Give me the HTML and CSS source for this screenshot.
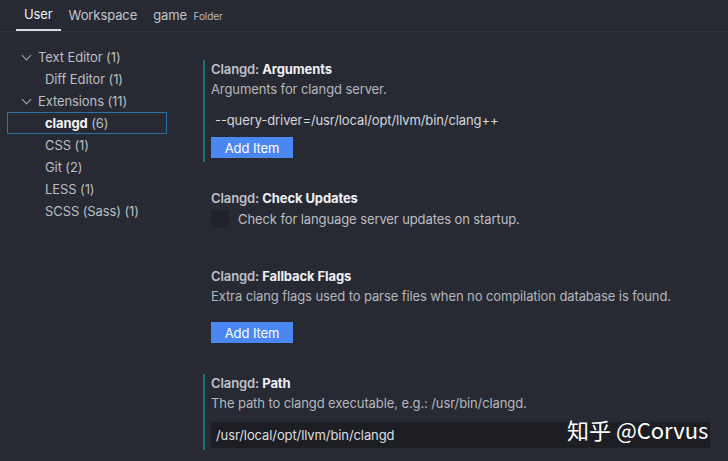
FILE: index.html
```html
<!DOCTYPE html>
<html lang="en">
<head>
    <meta charset="UTF-8">
    <title>Settings</title>
    <link rel="stylesheet" href="styles.css">
</head>
<body>
    <div class="tabs">
        <div class="tab active">User</div>
        <div class="tab">Workspace</div>
        <div class="tab">game <span class="tab-hint">Folder</span></div>
    </div>

    <div class="layout">
        <div class="tree">
            <div class="tree-row level-0"><span class="chevron"></span>Text Editor (1)</div>
            <div class="tree-row level-1">Diff Editor (1)</div>
            <div class="tree-row level-0"><span class="chevron"></span>Extensions (11)</div>
            <div class="tree-row level-1 selected"><b>clangd</b>&nbsp;(6)</div>
            <div class="tree-row level-1">CSS (1)</div>
            <div class="tree-row level-1">Git (2)</div>
            <div class="tree-row level-1">LESS (1)</div>
            <div class="tree-row level-1">SCSS (Sass) (1)</div>
        </div>

        <div class="settings">
            <div class="setting modified first">
                <div class="setting-title">Clangd: <b>Arguments</b></div>
                <div class="setting-desc">Arguments for clangd server.</div>
                <div class="list-item">--query-driver=/usr/local/opt/llvm/bin/clang++</div>
                <button class="add-btn">Add Item</button>
            </div>

            <div class="setting check-setting">
                <div class="setting-title">Clangd: <b>Check Updates</b></div>
                <label class="check-row"><span class="checkbox"></span>Check for language server updates on startup.</label>
            </div>

            <div class="setting flags-setting">
                <div class="setting-title">Clangd: <b>Fallback Flags</b></div>
                <div class="setting-desc">Extra clang flags used to parse files when no compilation database is found.</div>
                <button class="add-btn spaced">Add Item</button>
            </div>

            <div class="setting modified path-setting">
                <div class="setting-title">Clangd: <b>Path</b></div>
                <div class="setting-desc">The path to clangd executable, e.g.: /usr/bin/clangd.</div>
                <div class="text-input">/usr/local/opt/llvm/bin/clangd</div>
            </div>
        </div>
    </div>

    <div class="watermark">知乎 @Corvus</div>
</body>
</html>
```

FILE: styles.css
```css
body {
    margin: 0;
    width: 728px;
    height: 461px;
    overflow: hidden;
    position: relative;
    background-color: #272a33;
    color: #bfc1c6;
    font-family: Inter, "Noto Sans", sans-serif;
    font-size: 13px;
    letter-spacing: -0.1px;
}
.tabs {
    display: flex;
    height: 31px;
    padding-left: 16px;
    border-bottom: 1px solid #33363e;
}
.tab {
    padding: 0 8px;
    line-height: 30px;
    color: #c3c5ca;
}
.tab.active {
    color: #eceef2;
    border-bottom: 2px solid #d8dade;
    line-height: 29px;
}
.tab-hint {
    font-size: 10px;
    margin-left: 3px;
    color: #b8bac0;
}
.layout {
    display: flex;
}
.tree {
    width: 203px;
    padding-top: 14px;
}
.tree-row {
    height: 22px;
    line-height: 22px;
    color: #bcbec3;
    white-space: nowrap;
    box-sizing: border-box;
    margin-left: 7px;
    width: 160px;
}
.level-0 {
    padding-left: 14px;
}
.level-1 {
    padding-left: 38px;
}
.chevron {
    display: inline-block;
    width: 6px;
    height: 6px;
    border-right: 1px solid #a8aab0;
    border-bottom: 1px solid #a8aab0;
    transform: rotate(45deg);
    margin: 0 8px 3px 2px;
}
.selected {
    border: 1px solid #2b73a6;
    line-height: 20px;
    padding-left: 37px;
}
.selected b {
    color: #f2f3f5;
}
.settings {
    flex: 1;
    padding-top: 28px;
}
.setting {
    border-left: 2px solid transparent;
    padding: 0 0 4px 6px;
}
.setting.modified {
    border-left-color: #1c6f7c;
}
.setting-title {
    line-height: 18px;
    color: #c0c2c7;
    font-weight: 600;
}
.setting-title b {
    color: #eef0f3;
    font-weight: 700;
}
.setting-desc {
    margin-top: 2px;
    line-height: 18px;
    color: #b5b7bc;
}
.list-item {
    margin-top: 12px;
    line-height: 20px;
    padding-left: 4px;
    color: #d6d8dc;
}
.add-btn {
    display: block;
    margin-top: 7px;
    width: 82px;
    height: 21px;
    border: none;
    background-color: #4a87f0;
    color: #ffffff;
    font-family: inherit;
    font-size: 13px;
    letter-spacing: -0.1px;
    padding: 0;
}
.add-btn.spaced {
    margin-top: 17px;
}
.check-setting {
    margin-top: 27px;
}
.check-row {
    display: flex;
    align-items: center;
    gap: 9px;
    margin-top: 3px;
    line-height: 18px;
    color: #bcbec3;
}
.checkbox {
    width: 18px;
    height: 18px;
    border-radius: 3px;
    background-color: #1f2228;
}
.flags-setting {
    margin-top: 35px;
}
.path-setting {
    margin-top: 27px;
    padding-bottom: 2px;
}
.text-input {
    margin-top: 10px;
    width: 499px;
    height: 26px;
    line-height: 26px;
    padding-left: 5px;
    background-color: #1c1e23;
    color: #dcdee2;
    box-sizing: border-box;
}
.watermark {
    position: absolute;
    left: 567px;
    top: 413px;
    font-family: "Noto Sans CJK SC", "Noto Sans", sans-serif;
    font-size: 22px;
    color: #ffffff;
    letter-spacing: 0;
}
```
